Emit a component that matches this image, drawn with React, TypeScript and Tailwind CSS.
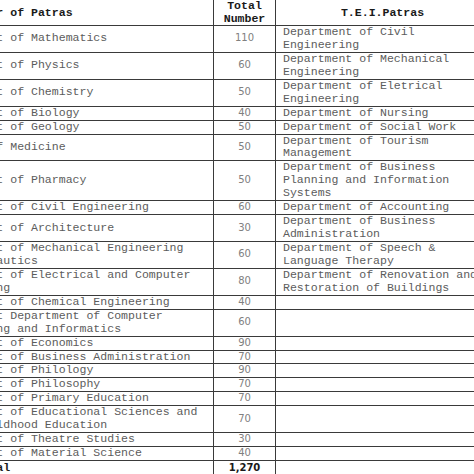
import React from "react";

type Row = { left: string[]; num: string; right: string[] };

const rows: Row[] = [
  { left: ["Department of Mathematics"], num: "110", right: ["Department of Civil", "Engineering"] },
  { left: ["Department of Physics"], num: "60", right: ["Department of Mechanical", "Engineering"] },
  { left: ["Department of Chemistry"], num: "50", right: ["Department of Eletrical", "Engineering"] },
  { left: ["Department of Biology"], num: "40", right: ["Department of Nursing"] },
  { left: ["Department of Geology"], num: "50", right: ["Department of Social Work"] },
  { left: ["Faculty of Medicine"], num: "50", right: ["Department of Tourism", "Management"] },
  { left: ["Department of Pharmacy"], num: "50", right: ["Department of Business", "Planning and Information", "Systems"] },
  { left: ["Department of Civil Engineering"], num: "60", right: ["Department of Accounting"] },
  { left: ["Department of Architecture"], num: "30", right: ["Department of Business", "Administration"] },
  { left: ["Department of Mechanical Engineering", "and Aeronautics"], num: "60", right: ["Department of Speech &", "Language Therapy"] },
  { left: ["Department of Electrical and Computer", "Engineering"], num: "80", right: ["Department of Renovation and", "Restoration of Buildings"] },
  { left: ["Department of Chemical Engineering"], num: "40", right: [] },
  { left: ["Department Department of Computer", "Engineering and Informatics"], num: "60", right: [] },
  { left: ["Department of Economics"], num: "90", right: [] },
  { left: ["Department of Business Administration"], num: "70", right: [] },
  { left: ["Department of Philology"], num: "90", right: [] },
  { left: ["Department of Philosophy"], num: "70", right: [] },
  { left: ["Department of Primary Education"], num: "70", right: [] },
  { left: ["Department of Educational Sciences and", "Early Childhood Education"], num: "70", right: [] },
  { left: ["Department of Theatre Studies"], num: "30", right: [] },
  { left: ["Department of Material Science"], num: "40", right: [] },
];

const mono = "font-['Liberation_Mono','Courier_New',monospace]";
const sans = "font-['DejaVu_Sans','Verdana',sans-serif]";

function Lines({ lines }: { lines: string[] }) {
  return (
    <>
      {lines.map((l, i) => (
        <div key={i} className="whitespace-pre">
          {l}
        </div>
      ))}
    </>
  );
}

export default function App() {
  return (
    <div className="w-[474px] h-[474px] overflow-hidden bg-white">
      <table className="table-fixed border-collapse ml-[-74px] mt-[-2px] w-[563px]">
        <colgroup>
          <col className="w-[287px]" />
          <col className="w-[62px]" />
          <col className="w-[214px]" />
        </colgroup>
        <thead>
          <tr>
            <th
              className={`${mono} border border-[#3a3a3a] text-left align-middle pl-[7px] text-[11.55px] leading-[13px] font-bold text-[#1a1a1a] whitespace-pre`}
            >
              Uni. Chair of Patras
            </th>
            <th
              className={`${mono} border border-[#3a3a3a] text-center align-middle text-[11.55px] leading-[13px] font-bold text-[#1a1a1a]`}
            >
              <div>Total</div>
              <div>Number</div>
            </th>
            <th
              className={`${mono} border border-[#3a3a3a] text-center align-middle text-[11.55px] leading-[13px] font-bold text-[#1a1a1a]`}
            >
              T.E.I.Patras
            </th>
          </tr>
        </thead>
        <tbody>
          {rows.map((r, i) => (
            <tr key={i}>
              <td
                className={`${mono} border border-[#3a3a3a] align-middle pl-[7px] p-0 text-[11.55px] leading-[12.94px] text-[#5c5c5c]`}
              >
                <Lines lines={r.left} />
              </td>
              <td
                className={`${sans} border border-[#3a3a3a] align-middle text-center p-0 text-[10px] leading-[12.94px] text-[#808080]`}
              >
                {r.num}
              </td>
              <td
                className={`${mono} border border-[#3a3a3a] align-middle pl-[7px] p-0 text-[11.55px] leading-[12.94px] text-[#5c5c5c]`}
              >
                <Lines lines={r.right} />
              </td>
            </tr>
          ))}
          <tr>
            <td
              className={`${mono} border border-[#3a3a3a] align-middle pl-[7px] p-0 text-[11.55px] leading-[14px] font-bold text-[#1a1a1a] whitespace-pre`}
            >
              Grand Total
            </td>
            <td
              className={`${sans} border border-[#3a3a3a] align-middle text-center p-0 text-[10px] leading-[14px] font-bold text-[#1a1a1a]`}
            >
              1,270
            </td>
            <td className="border border-[#3a3a3a] p-0"></td>
          </tr>
        </tbody>
      </table>
    </div>
  );
}
